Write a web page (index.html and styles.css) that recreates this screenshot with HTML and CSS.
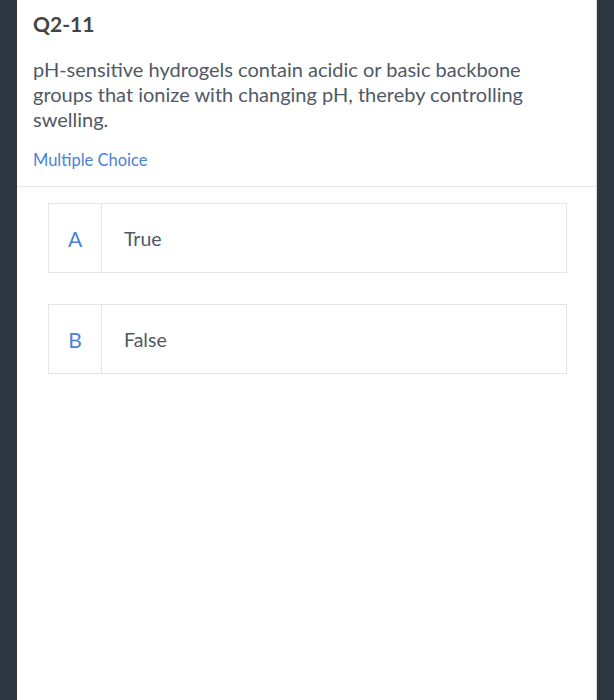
FILE: index.html
```html
<!DOCTYPE html>
<html>
<head>
<meta charset="utf-8">
<link rel="stylesheet" href="styles.css">
</head>
<body>
<div class="panel">
  <div class="question">
    <h1 class="title">Q2-11</h1>
    <p class="text">pH-sensitive hydrogels contain acidic or basic backbone groups that ionize with changing pH, thereby controlling swelling.</p>
    <div class="type">Multiple Choice</div>
  </div>
  <div class="options">
    <div class="option">
      <div class="letter">A</div>
      <div class="label">True</div>
    </div>
    <div class="option">
      <div class="letter">B</div>
      <div class="label">False</div>
    </div>
  </div>
</div>
</body>
</html>
```

FILE: styles.css
```css
html, body {
  margin: 0;
  padding: 0;
  height: 100%;
}
body {
  background: #2c3741;
  font-family: "Lato", "Open Sans", sans-serif;
}
.panel {
  margin-left: 17px;
  width: 580px;
  height: 100%;
  background: #fff;
  border-right: 1px solid #d8dadd;
  box-sizing: border-box;
}
.question {
  padding: 10px 16px 15px 16px;
  border-bottom: 1px solid #e6e7e9;
}
.title {
  margin: 0;
  font-size: 21px;
  line-height: 28px;
  font-weight: 700;
  color: #444;
}
.text {
  margin: 19px 0 0 0;
  max-width: 505px;
  font-size: 20px;
  line-height: 25px;
  color: #4f5966;
}
.type {
  margin-top: 17px;
  font-size: 16.5px;
  line-height: 22px;
  color: #4a82d8;
}
.options {
  padding: 16px 29px 0 31px;
  display: flex;
  flex-direction: column;
  gap: 31px;
}
.option {
  display: flex;
  height: 70px;
  border: 1px solid #e3e4e6;
  box-sizing: border-box;
}
.letter {
  width: 52px;
  border-right: 1px solid #e3e4e6;
  display: flex;
  align-items: center;
  justify-content: center;
  font-size: 21px;
  color: #4a82d8;
}
.label {
  display: flex;
  align-items: center;
  padding-left: 22px;
  font-size: 19.5px;
  color: #4f5966;
}
```
